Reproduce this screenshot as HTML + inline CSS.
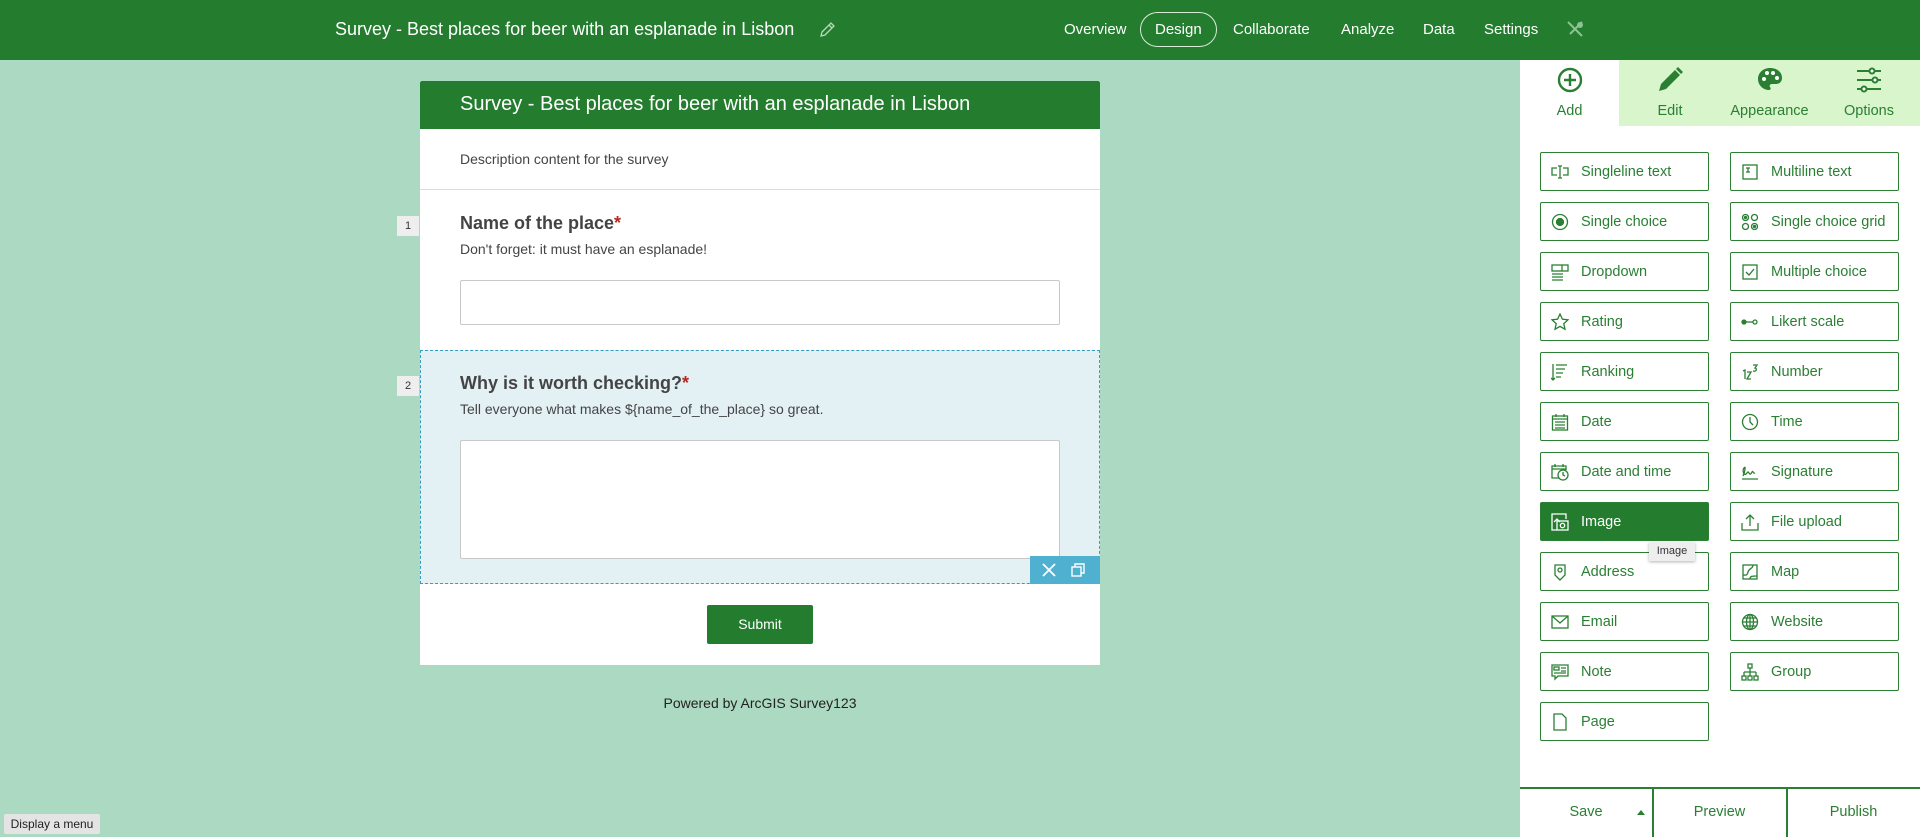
<!DOCTYPE html>
<html><head><meta charset="utf-8"><style>
*{box-sizing:border-box;margin:0;padding:0}
body{width:1920px;height:837px;overflow:hidden;background:#acd9c1;font-family:"Liberation Sans",sans-serif;position:relative;color:#323232}
.a{position:absolute}
.hdr{left:0;top:0;width:1920px;height:60px;background:#247c2f;color:#fff}
.nav{top:21px;font-size:15px;color:#fff}
.card{left:420px;top:81px;width:680px;height:584px;background:#fff}
.btn{position:absolute;width:169px;height:39px;border:1.5px solid #2a7f33;border-radius:2px;background:#fff;color:#2a7f33;font-size:14.5px;line-height:39px;padding-left:40px}
.btn svg{position:absolute;left:10px;top:10px;width:18px;height:18px;fill:none;stroke:#2a7f33;stroke-width:1.3}
.btn.on{background:#247c2f;color:#fff}
.btn.on svg{stroke:#fff}
.tab{top:60px;height:66px;text-align:center;color:#2a7f33;font-size:14.5px}
.tab svg{display:block;margin:6px auto 0;width:28px;height:28px}
.tab span{display:block;margin-top:9px}
</style></head><body>
<div class="a hdr">
 <div class="a" style="left:335px;top:19px;font-size:18px">Survey - Best places for beer with an esplanade in Lisbon</div>
 <svg class="a" style="left:818px;top:21px" width="18" height="18" viewBox="0 0 18 18" fill="none" stroke="#b8dbb9" stroke-width="1.3"><path d="M3 15l1-4L13 2l3 3-9 9z M11 4l3 3"/></svg>
 <div class="a nav" style="left:1064px">Overview</div>
 <div class="a" style="left:1140px;top:12px;width:77px;height:35px;border:1.3px solid #d8ecd8;border-radius:18px"></div>
 <div class="a nav" style="left:1155px">Design</div>
 <div class="a nav" style="left:1233px">Collaborate</div>
 <div class="a nav" style="left:1341px">Analyze</div>
 <div class="a nav" style="left:1423px">Data</div>
 <div class="a nav" style="left:1484px">Settings</div>
 <svg class="a" style="left:1566px;top:20px" width="18" height="18" viewBox="0 0 18 18" stroke="#8cc38f" stroke-width="2" fill="#8cc38f"><path d="M2 2l14 14M16 2L4 14"/><circle cx="14" cy="5" r="2"/></svg>
</div>

<div class="a card">
 <div class="a" style="left:0;top:0;width:680px;height:48px;background:#247c2f;border-radius:2px 2px 0 0"></div>
 <div class="a" style="left:40px;top:12px;font-size:20px;color:#fff">Survey - Best places for beer with an esplanade in Lisbon</div>
 <div class="a" style="left:40px;top:70px;font-size:14px;color:#444">Description content for the survey</div>
 <div class="a" style="left:0;top:108px;width:680px;height:1px;background:#ddd"></div>
 <div class="a" style="left:40px;top:132px;font-size:18px;font-weight:bold;color:#444">Name of the place<span style="color:#b5281f">*</span></div>
 <div class="a" style="left:40px;top:160px;font-size:14px;color:#444">Don't forget: it must have an esplanade!</div>
 <div class="a" style="left:40px;top:199px;width:600px;height:45px;border:1px solid #c8c8c8;border-radius:2px"></div>
 <div class="a" style="left:0;top:269px;width:680px;height:234px;background:#e3f1f5;border:1px dashed #3a9bc0"></div>
 <div class="a" style="left:40px;top:292px;font-size:18px;font-weight:bold;color:#444">Why is it worth checking?<span style="color:#b5281f">*</span></div>
 <div class="a" style="left:40px;top:320px;font-size:14px;color:#444">Tell everyone what makes ${name_of_the_place} so great.</div>
 <div class="a" style="left:40px;top:359px;width:600px;height:119px;border:1px solid #c8c8c8;background:#fff;border-radius:2px"></div>
 <div class="a" style="left:610px;top:475px;width:70px;height:28px;background:#4fb0d0"></div>
 <svg class="a" style="left:622px;top:482px" width="14" height="14" viewBox="0 0 14 14" stroke="#fff" stroke-width="1.8"><path d="M1 1l12 12M13 1L1 13"/></svg>
 <svg class="a" style="left:651px;top:482px" width="14" height="14" viewBox="0 0 14 14" stroke="#fff" stroke-width="1.4" fill="none"><rect x="1" y="4" width="9" height="9"/><path d="M4 4V1h9v9h-3"/></svg>
 <div class="a" style="left:287px;top:524px;width:106px;height:39px;background:#247c2f;color:#fff;font-size:14px;text-align:center;line-height:39px;border-radius:2px">Submit</div>
</div>
<div class="a" style="left:397px;top:216px;width:22px;height:20px;background:#eee;font-size:11px;line-height:20px;text-align:center;color:#333">1</div>
<div class="a" style="left:397px;top:376px;width:22px;height:20px;background:#eee;font-size:11px;line-height:20px;text-align:center;color:#333">2</div>
<div class="a" style="left:0;top:695px;width:1520px;text-align:center;font-size:14px;color:#222">Powered by ArcGIS Survey123</div>
<div class="a" style="left:4px;top:814px;width:96px;height:20px;background:#e4e4e4;font-size:12px;line-height:20px;text-align:center;color:#222;border-radius:2px">Display a menu</div>

<div class="a" style="left:1520px;top:60px;width:400px;height:777px;background:#fff"></div>
<div class="a" style="left:1619px;top:60px;width:301px;height:66px;background:#d8f5cc"></div>
<div class="a tab" style="left:1520px;width:99px"><svg viewBox="0 0 28 28" fill="none" stroke="#2a7f33" stroke-width="2.4"><circle cx="14" cy="14" r="11"/><path d="M14 8v12M8 14h12"/></svg><span>Add</span></div>
<div class="a tab" style="left:1619px;width:102px"><svg viewBox="0 0 28 28" fill="#2a7f33"><path d="M3 25l2-7L19 4l5 5-14 14z"/><path d="M20 3l2-2 5 5-2 2z"/></svg><span>Edit</span></div>
<div class="a tab" style="left:1721px;width:97px"><svg viewBox="0 0 28 28"><path d="M14 2C7 2 2 7 2 13c0 6 5 11 11 11 2 0 2-2 1-3s0-3 2-3h4c4 0 6-3 6-6 0-6-5-10-12-10z" fill="#2a7f33"/><circle cx="8" cy="13" r="2" fill="#fff"/><circle cx="11" cy="7" r="2" fill="#fff"/><circle cx="17" cy="7" r="2" fill="#fff"/><circle cx="21" cy="12" r="2" fill="#fff"/></svg><span>Appearance</span></div>
<div class="a tab" style="left:1818px;width:102px"><svg viewBox="0 0 28 28" fill="#fff" stroke="#2a7f33" stroke-width="2"><path d="M2 5h24M2 14h24M2 23h24"/><circle cx="17" cy="5" r="2.5"/><circle cx="20" cy="14" r="2.5"/><circle cx="9" cy="23" r="2.5"/></svg><span>Options</span></div>

<div class="btn" style="left:1540px;top:152px"><svg viewBox="0 0 18 18"><path d="M6 5H1v7h5M12 5h5v7h-5M9 3v12M7 3h4M7 15h4"/></svg>Singleline text</div>
<div class="btn" style="left:1730px;top:152px"><svg viewBox="0 0 18 18"><rect x="2" y="2" width="14" height="14"/><path d="M5 5h4M7 5v4M5 9h4"/></svg>Multiline text</div>
<div class="btn" style="left:1540px;top:202px"><svg viewBox="0 0 18 18"><circle cx="9" cy="9" r="7.5"/><circle cx="9" cy="9" r="3.5" fill="#2a7f33"/></svg>Single choice</div>
<div class="btn" style="left:1730px;top:202px"><svg viewBox="0 0 18 18"><circle cx="4.5" cy="4.5" r="3"/><circle cx="13.5" cy="4.5" r="3"/><circle cx="4.5" cy="13.5" r="3"/><circle cx="13.5" cy="13.5" r="3"/><circle cx="4.5" cy="4.5" r="1" fill="#2a7f33"/><circle cx="13.5" cy="13.5" r="1" fill="#2a7f33"/></svg>Single choice grid</div>
<div class="btn" style="left:1540px;top:252px"><svg viewBox="0 0 18 18"><rect x="1" y="2" width="16" height="6"/><path d="M11 2v6M1 11h11M1 14h11M1 17h11"/></svg>Dropdown</div>
<div class="btn" style="left:1730px;top:252px"><svg viewBox="0 0 18 18"><rect x="2" y="2" width="14" height="14"/><path d="M5 9l3 3 5-6"/></svg>Multiple choice</div>
<div class="btn" style="left:1540px;top:302px"><svg viewBox="0 0 18 18"><path d="M9 1l2.4 5.2 5.6.6-4.2 3.8 1.2 5.6L9 13.4 4 16.2l1.2-5.6L1 6.8l5.6-.6z"/></svg>Rating</div>
<div class="btn" style="left:1730px;top:302px"><svg viewBox="0 0 18 18"><circle cx="3" cy="9" r="2" fill="#2a7f33"/><path d="M5 9h7"/><circle cx="14" cy="9" r="2"/></svg>Likert scale</div>
<div class="btn" style="left:1540px;top:352px"><svg viewBox="0 0 18 18"><path d="M2 1v16M0 15l2 2 2-2M5 2h11M5 6h9M5 10h7M5 14h5"/></svg>Ranking</div>
<div class="btn" style="left:1730px;top:352px"><svg viewBox="0 0 18 18"><path d="M2 8l2-1v9M6 9h4l-4 7h4M12 2h4l-2 3c2 0 2 4-2 3"/></svg>Number</div>
<div class="btn" style="left:1540px;top:402px"><svg viewBox="0 0 18 18"><rect x="1.5" y="3" width="15" height="14"/><path d="M1.5 6h15M5 1v3M13 1v3M4 9h10M4 12h10M4 15h10"/></svg>Date</div>
<div class="btn" style="left:1730px;top:402px"><svg viewBox="0 0 18 18"><circle cx="9" cy="9" r="7.5"/><path d="M9 4v5l3 3"/></svg>Time</div>
<div class="btn" style="left:1540px;top:452px"><svg viewBox="0 0 18 18"><path d="M8 15H1V3h14v4M1 6h14M4 1v3M12 1v3"/><circle cx="12" cy="12" r="5"/><path d="M12 9v3l2 1"/></svg>Date and time</div>
<div class="btn" style="left:1730px;top:452px"><svg viewBox="0 0 18 18"><path d="M1 16h16M2 13c2-4 3-11 1-8s0 8 2 6 2-3 3-1 2 1 3-1 1 2 3 1"/></svg>Signature</div>
<div class="btn on" style="left:1540px;top:502px"><svg viewBox="0 0 18 18"><path d="M6 17H1V1h14v5"/><rect x="6" y="8" width="11" height="9"/><circle cx="11.5" cy="12.5" r="2.2"/><path d="M3 9l3-3 3 3"/></svg>Image</div>
<div class="btn" style="left:1730px;top:502px"><svg viewBox="0 0 18 18"><path d="M1 10v7h16v-7M9 13V2M5 6l4-4 4 4"/></svg>File upload</div>
<div class="btn" style="left:1540px;top:552px"><svg viewBox="0 0 18 18"><path d="M9 17l-5-5V2h10v10z"/><circle cx="9" cy="7" r="2"/></svg>Address</div>
<div class="btn" style="left:1730px;top:552px"><svg viewBox="0 0 18 18"><rect x="2" y="2" width="14" height="14"/><path d="M12 2c0 4-4 3-5 7s-2 3-5 3M9 16c0-3 2-3 7-3"/></svg>Map</div>
<div class="btn" style="left:1540px;top:602px"><svg viewBox="0 0 18 18"><rect x="1" y="3" width="16" height="12"/><path d="M1 3l8 7 8-7"/></svg>Email</div>
<div class="btn" style="left:1730px;top:602px"><svg viewBox="0 0 18 18"><circle cx="9" cy="9" r="7.5"/><ellipse cx="9" cy="9" rx="3.5" ry="7.5"/><path d="M1.5 9h15M3 5h12M3 13h12M9 1.5v15"/></svg>Website</div>
<div class="btn" style="left:1540px;top:652px"><svg viewBox="0 0 18 18"><path d="M1 2h16v11H7l-3 3v-3H1z"/><rect x="3" y="4" width="5" height="3"/><path d="M10 5h5M3 10h12M10 8h5"/></svg>Note</div>
<div class="btn" style="left:1730px;top:652px"><svg viewBox="0 0 18 18"><rect x="7" y="1" width="4" height="4"/><path d="M9 5v4M3 9h12M3 9v4M9 9v4M15 9v4"/><rect x="1" y="13" width="4" height="4"/><rect x="7" y="13" width="4" height="4"/><rect x="13" y="13" width="4" height="4"/></svg>Group</div>
<div class="btn" style="left:1540px;top:702px"><svg viewBox="0 0 18 18"><path d="M3 1h8l4 4v12H3z"/></svg>Page</div>
<div class="a" style="left:1649px;top:542px;width:46px;height:19px;background:#eee;box-shadow:0 1px 3px rgba(0,0,0,.3);font-size:11px;line-height:19px;text-align:center;color:#333;z-index:5">Image</div>

<div class="a" style="left:1520px;top:787px;width:400px;height:1.5px;background:#2a7f33"></div>
<div class="a" style="left:1652px;top:787px;width:1.5px;height:50px;background:#2a7f33"></div>
<div class="a" style="left:1786px;top:787px;width:1.5px;height:50px;background:#2a7f33"></div>
<div class="a" style="left:1520px;top:804px;width:132px;text-align:center;font-size:14.5px;color:#2a7f33">Save</div>
<div class="a" style="left:1637px;top:810px;width:0;height:0;border-left:4px solid transparent;border-right:4px solid transparent;border-bottom:5px solid #2a7f33"></div>
<div class="a" style="left:1653px;top:804px;width:133px;text-align:center;font-size:14.5px;color:#2a7f33">Preview</div>
<div class="a" style="left:1787px;top:804px;width:133px;text-align:center;font-size:14.5px;color:#2a7f33">Publish</div>
</body></html>
